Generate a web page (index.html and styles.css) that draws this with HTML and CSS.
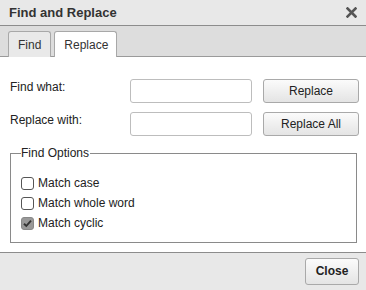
FILE: index.html
```html
<!DOCTYPE html>
<html lang="en">
<head>
    <meta charset="UTF-8">
    <title>Find and Replace</title>
    <link rel="stylesheet" href="styles.css">
</head>
<body>
    <div class="dialog">
        <!-- Title bar -->
        <div class="titlebar">
            <span class="title">Find and Replace</span>
            <span class="close-x">
                <svg width="11" height="11" viewBox="0 0 11 11"><path d="M1.5 1.5 L9.5 9.5 M9.5 1.5 L1.5 9.5" stroke="#555" stroke-width="2.6" stroke-linecap="square"/></svg>
            </span>
        </div>

        <!-- Tabs -->
        <div class="tabs">
            <div class="tab">Find</div>
            <div class="tab active">Replace</div>
        </div>

        <!-- Content -->
        <div class="content">
            <div class="form-grid">
                <label class="field-label">Find what:</label>
                <input type="text" class="field-input">
                <button class="btn">Replace</button>

                <label class="field-label">Replace with:</label>
                <input type="text" class="field-input">
                <button class="btn">Replace All</button>
            </div>

            <fieldset class="options">
                <legend>Find Options</legend>
                <div class="option">
                    <span class="check"></span>
                    <span>Match case</span>
                </div>
                <div class="option">
                    <span class="check"></span>
                    <span>Match whole word</span>
                </div>
                <div class="option">
                    <span class="check checked">
                        <svg width="11" height="11" viewBox="0 0 11 11"><path d="M2 5.8 L4.3 8 L9 2.6" fill="none" stroke="#333" stroke-width="1.9"/></svg>
                    </span>
                    <span>Match cyclic</span>
                </div>
            </fieldset>
        </div>

        <!-- Footer -->
        <div class="footer">
            <button class="btn btn-close">Close</button>
        </div>
    </div>
</body>
</html>
```

FILE: styles.css
```css
* {
    margin: 0;
    padding: 0;
    box-sizing: border-box;
}

body {
    font-family: "Liberation Sans", Arial, sans-serif;
    font-size: 12px;
    color: #222;
    background: #ffffff;
}

.dialog {
    width: 366px;
    height: 290px;
    display: flex;
    flex-direction: column;
    background: #ffffff;
}

/* Title bar */
.titlebar {
    height: 26px;
    background: #e8e8e8;
    border-bottom: 1px solid #8c8c8c;
    display: flex;
    align-items: center;
    justify-content: space-between;
    padding: 0 9px 1px 9px;
}

.title {
    font-weight: bold;
    font-size: 13px;
    color: #333;
}

.close-x {
    display: flex;
}

/* Tabs */
.tabs {
    height: 31px;
    background: #dddddd;
    border-bottom: 1px solid #9a9a9a;
    display: flex;
    align-items: flex-end;
    padding-left: 8px;
    gap: 3px;
}

.tab {
    height: 26px;
    margin-bottom: -1px;
    padding: 0 9px;
    border: 1px solid #a8a8a8;
    border-bottom: none;
    border-radius: 3px 3px 0 0;
    background: #e9e9e9;
    display: flex;
    align-items: center;
    font-size: 12px;
    color: #333;
}

.tab.active {
    background: #ffffff;
    padding: 0 8px 0 9px;
}

/* Content */
.content {
    flex: 1;
    padding: 22px 7px 0 10px;
}

.form-grid {
    display: grid;
    grid-template-columns: 109px 122px 96px;
    grid-template-rows: 24px 24px;
    column-gap: 11px;
    row-gap: 9px;
    align-items: center;
}

.field-label {
    align-self: start;
    padding-top: 1px;
    font-size: 12px;
    color: #222;
}

.field-input {
    height: 24px;
    border: 1px solid #bdbdbd;
    border-radius: 3px;
    background: #ffffff;
    outline: none;
}

.btn {
    height: 24px;
    font-family: "Liberation Sans", Arial, sans-serif;
    font-size: 12px;
    color: #222;
    background: linear-gradient(#fbfbfb, #e4e4e4);
    border: 1px solid #a9a9a9;
    border-radius: 3px;
}

/* Options */
.options {
    margin-top: 10px;
    width: 347px;
    height: 97px;
    border: 1px solid #8a8a8a;
    padding: 13px 0 0 10px;
}

.options legend {
    padding: 0 1px 0 0;
    font-size: 12px;
    color: #222;
}

.option {
    display: flex;
    align-items: center;
    height: 20px;
    gap: 4px;
}

.check {
    width: 13px;
    height: 13px;
    border: 1px solid #555;
    border-radius: 3px;
    background: #ffffff;
    display: flex;
    align-items: center;
    justify-content: center;
}

.check.checked {
    background: #999;
    border-color: #888;
}

/* Footer */
.footer {
    height: 38px;
    background: #e8e8e8;
    border-top: 1px solid #8c8c8c;
    display: flex;
    justify-content: flex-end;
    align-items: center;
    padding-right: 7px;
    padding-bottom: 1px;
}

.btn-close {
    width: 54px;
    height: 27px;
    font-weight: bold;
}
```
